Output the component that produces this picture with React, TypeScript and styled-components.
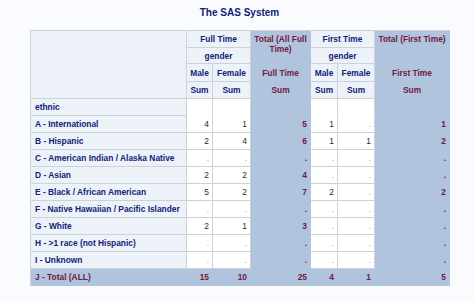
import React, { FC } from 'react';
import styled, { createGlobalStyle, css } from 'styled-components';

type Cell = number | null;

interface Row {
    label: string;
    values: Cell[];
}

// columns: FT male, FT female, total FT, first male, first female, total first
const TOTAL_COLS = [2, 5];

const rows: Row[] = [
    { label: 'A - International', values: [4, 1, 5, 1, null, 1] },
    { label: 'B - Hispanic', values: [2, 4, 6, 1, 1, 2] },
    { label: 'C - American Indian / Alaska Native', values: [null, null, null, null, null, null] },
    { label: 'D - Asian', values: [2, 2, 4, null, null, null] },
    { label: 'E - Black / African American', values: [5, 2, 7, 2, null, 2] },
    { label: 'F - Native Hawaiian / Pacific Islander', values: [null, null, null, null, null, null] },
    { label: 'G - White', values: [2, 1, 3, null, null, null] },
    { label: 'H - >1 race (not Hispanic)', values: [null, null, null, null, null, null] },
    { label: 'I - Unknown', values: [null, null, null, null, null, null] },
];

const totalRow: Row = { label: 'J - Total (ALL)', values: [15, 10, 25, 4, 1, 5] };

const colWidths = [156, 26, 38, 60, 27, 37, 75];

const COLORS = {
    page: '#fafbfe',
    header: '#edf2f9',
    navy: '#112277',
    line: '#cdd2da',
    total: '#b0c4de',
    maroon: '#731a3f',
    text: '#2b2b2b',
    dot: '#a0a0a0',
};

const GlobalStyle = createGlobalStyle`
    body {
        margin: 0;
        background: ${COLORS.page};
        font-family: 'Liberation Sans', Arial, sans-serif;
    }
`;

const Page = styled.div`
    width: 419px;
    margin-left: 30px;
    padding-top: 7px;
`;

const Title = styled.h1`
    margin: 0 0 11px;
    font-size: 10px;
    line-height: 12px;
    font-weight: bold;
    text-align: center;
    color: ${COLORS.navy};
`;

const Table = styled.table`
    table-layout: fixed;
    width: 419px;
    border-collapse: separate;
    border-spacing: 0;
    border-top: 1px solid ${COLORS.line};
    border-left: 1px solid ${COLORS.line};
    font-size: 8.4px;
    line-height: 10px;
`;

const HeadRow = styled.tr<{ $h: number }>`
    height: ${props => props.$h}px;
`;

const BodyRow = styled.tr`
    height: 17px;
`;

const cellBase = css`
    padding: 0 3px;
    border-right: 1px solid ${COLORS.line};
    border-bottom: 1px solid ${COLORS.line};
    white-space: nowrap;
    overflow: hidden;
`;

const HeadCell = styled.th<{ $total?: boolean; $top?: boolean }>`
    ${cellBase};
    font-weight: bold;
    text-align: center;
    vertical-align: ${props => (props.$top ? 'top' : 'middle')};
    padding-top: ${props => (props.$top ? '3px' : '0')};
    white-space: ${props => (props.$top ? 'normal' : 'nowrap')};
    color: ${props => (props.$total ? COLORS.maroon : COLORS.navy)};
    background: ${props => (props.$total ? COLORS.total : COLORS.header)};
    border-color: ${props => (props.$total ? COLORS.total : COLORS.line)};
`;

const RowLabel = styled.th<{ $total?: boolean }>`
    ${cellBase};
    padding-left: 4px;
    font-weight: bold;
    text-align: left;
    color: ${props => (props.$total ? COLORS.maroon : COLORS.navy)};
    background: ${props => (props.$total ? COLORS.total : COLORS.header)};
    border-color: ${props => (props.$total ? COLORS.total : COLORS.line)};
`;

const DataCell = styled.td<{ $total?: boolean; $open?: boolean; $missing?: boolean }>`
    ${cellBase};
    text-align: right;
    padding-right: 3px;
    font-weight: ${props => (props.$total ? 'bold' : 'normal')};
    color: ${props => (props.$total ? COLORS.maroon : props.$missing ? COLORS.dot : COLORS.text)};
    background: ${props => (props.$total ? COLORS.total : '#ffffff')};
    ${props => props.$total && css`
        border-color: ${COLORS.total};
    `}
    ${props => props.$open && css`
        border-bottom-color: transparent;
    `}
`;

const renderValues = (values: Cell[], allTotal: boolean) =>
    values.map((v, i) => {
        const isTotal = allTotal || TOTAL_COLS.indexOf(i) !== -1;
        return (
            <DataCell key={i} $total={isTotal} $missing={v === null}>
                {v === null ? '.' : v}
            </DataCell>
        );
    });

const App: FC = () => {
    return (
        <Page>
            <GlobalStyle />
            <Title>The SAS System</Title>
            <Table>
                <colgroup>
                    {colWidths.map((w, i) => <col key={i} style={{ width: w }} />)}
                </colgroup>
                <thead>
                    <HeadRow $h={17}>
                        <HeadCell rowSpan={4} />
                        <HeadCell colSpan={2}>Full Time</HeadCell>
                        <HeadCell rowSpan={2} $total $top>Total (All Full Time)</HeadCell>
                        <HeadCell colSpan={2}>First Time</HeadCell>
                        <HeadCell rowSpan={2} $total $top>Total (First Time)</HeadCell>
                    </HeadRow>
                    <HeadRow $h={16}>
                        <HeadCell colSpan={2}>gender</HeadCell>
                        <HeadCell colSpan={2}>gender</HeadCell>
                    </HeadRow>
                    <HeadRow $h={18}>
                        <HeadCell>Male</HeadCell>
                        <HeadCell>Female</HeadCell>
                        <HeadCell $total>Full Time</HeadCell>
                        <HeadCell>Male</HeadCell>
                        <HeadCell>Female</HeadCell>
                        <HeadCell $total>First Time</HeadCell>
                    </HeadRow>
                    <HeadRow $h={17}>
                        <HeadCell>Sum</HeadCell>
                        <HeadCell>Sum</HeadCell>
                        <HeadCell $total>Sum</HeadCell>
                        <HeadCell>Sum</HeadCell>
                        <HeadCell>Sum</HeadCell>
                        <HeadCell $total>Sum</HeadCell>
                    </HeadRow>
                </thead>
                <tbody>
                    <BodyRow>
                        <RowLabel>ethnic</RowLabel>
                        {[0, 1, 2, 3, 4, 5].map(i => (
                            <DataCell key={i} $open $total={TOTAL_COLS.indexOf(i) !== -1} />
                        ))}
                    </BodyRow>
                    {rows.map(row => (
                        <BodyRow key={row.label}>
                            <RowLabel>{row.label}</RowLabel>
                            {renderValues(row.values, false)}
                        </BodyRow>
                    ))}
                    <BodyRow>
                        <RowLabel $total>{totalRow.label}</RowLabel>
                        {renderValues(totalRow.values, true)}
                    </BodyRow>
                </tbody>
            </Table>
        </Page>
    );
};

export default App;
